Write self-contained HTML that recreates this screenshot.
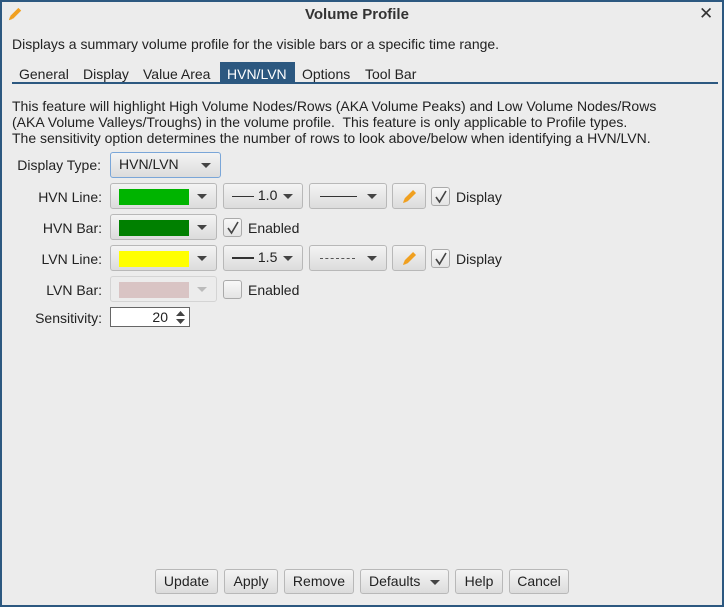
<!DOCTYPE html>
<html><head><style>
*{box-sizing:border-box}
body{margin:0;width:724px;height:607px;background:#ececec;font-family:"Liberation Sans",Arial,sans-serif;font-size:14px;color:#222;position:relative;overflow:hidden}
.frame{position:absolute;left:0;top:0;width:724px;height:607px;border:2px solid #2c5880}
.a{position:absolute;white-space:nowrap}
.btn{position:absolute;height:25px;border:1px solid #b8b8b8;border-radius:3px;background:linear-gradient(#f4f4f4,#dcdcdc);text-align:center;line-height:23px;font-size:14px;color:#222}
.tri{display:inline-block;width:0;height:0;border-left:5px solid transparent;border-right:5px solid transparent;border-top:5px solid #444;vertical-align:middle}
.lbl{position:absolute;text-align:right;width:90px;left:12px;font-size:14px}
.cb{position:absolute;width:19px;height:19px;border:1px solid #aaa;border-radius:3px;background:linear-gradient(#f8f8f8,#e4e4e4)}
.sw{position:absolute;left:8px;top:5px;width:70px;height:16px}
</style></head><body>
<div class="frame"></div>
<svg class="a" style="left:6px;top:5px" width="18" height="18" viewBox="0 0 16 16"><path d="M3 13 L4 9.5 L11 2.5 L13.5 5 L6.5 12 Z" fill="#f0a020"/><path d="M2.5 13.5 L3.5 10.5 L5.5 12.5 Z" fill="#f0a020"/></svg>
<div class="a" style="left:305px;top:6px;font-weight:bold;font-size:15px;color:#333">Volume Profile</div>
<div class="a" style="left:699px;top:4px;font-size:17px;color:#333">✕</div>
<div class="a" style="left:12px;top:36px">Displays a summary volume profile for the visible bars or a specific time range.</div>
<div class="a" style="left:12px;top:82px;width:706px;height:2px;background:#2c5880"></div>
<div class="a" style="left:220px;top:62px;width:75px;height:21px;background:#2c5880"></div>
<div class="a" style="left:19px;top:66px">General</div>
<div class="a" style="left:83px;top:66px">Display</div>
<div class="a" style="left:143px;top:66px">Value Area</div>
<div class="a" style="left:227px;top:66px;color:#fff">HVN/LVN</div>
<div class="a" style="left:302px;top:66px">Options</div>
<div class="a" style="left:365px;top:66px">Tool Bar</div>
<div class="a" style="left:12px;top:98px;line-height:16px">This feature will highlight High Volume Nodes/Rows (AKA Volume Peaks) and Low Volume Nodes/Rows<br>(AKA Volume Valleys/Troughs) in the volume profile.&nbsp; This feature is only applicable to Profile types.<br>The sensitivity option determines the number of rows to look above/below when identifying a HVN/LVN.</div>

<div class="lbl" style="top:157px;left:11px">Display Type:</div>
<div class="btn" style="left:110px;top:152px;width:111px;height:26px;border-color:#7aa6d8;text-align:left;padding-left:8px">HVN/LVN<span class="tri" style="position:absolute;right:9px;top:10px"></span></div>

<div class="lbl" style="top:189px">HVN Line:</div>
<div class="btn" style="left:110px;top:183px;width:107px;height:26px"><div class="sw" style="background:#00b400"></div><span class="tri" style="position:absolute;right:9px;top:10px"></span></div>
<div class="btn" style="left:223px;top:183px;width:80px;height:26px;text-align:left;padding-left:8px"><span style="display:inline-block;width:22px;height:1px;background:#333;vertical-align:middle"></span> 1.0<span class="tri" style="position:absolute;right:9px;top:10px"></span></div>
<div class="btn" style="left:309px;top:183px;width:78px;height:26px"><span style="position:absolute;left:10px;top:12px;width:37px;height:1px;background:#333"></span><span class="tri" style="position:absolute;right:9px;top:10px"></span></div>
<div class="btn" style="left:392px;top:183px;width:34px;height:26px"><svg style="position:absolute;left:7px;top:3px" width="19" height="19" viewBox="0 0 16 16"><path d="M3 13 L4 9.5 L11 2.5 L13.5 5 L6.5 12 Z" fill="#f0a020"/><path d="M2.5 13.5 L3.5 10.5 L5.5 12.5 Z" fill="#f0a020"/></svg></div>
<div class="cb" style="left:431px;top:187px"><svg width="17" height="17"><path d="M4 9 L7.5 14 L14 3" stroke="#444" stroke-width="1.6" fill="none"/></svg></div>
<div class="a" style="left:456px;top:189px">Display</div>

<div class="lbl" style="top:220px">HVN Bar:</div>
<div class="btn" style="left:110px;top:214px;width:107px;height:26px"><div class="sw" style="background:#008000"></div><span class="tri" style="position:absolute;right:9px;top:10px"></span></div>
<div class="cb" style="left:223px;top:218px"><svg width="17" height="17"><path d="M4 9 L7.5 14 L14 3" stroke="#444" stroke-width="1.6" fill="none"/></svg></div>
<div class="a" style="left:248px;top:220px">Enabled</div>

<div class="lbl" style="top:251px">LVN Line:</div>
<div class="btn" style="left:110px;top:245px;width:107px;height:26px"><div class="sw" style="background:#ffff00"></div><span class="tri" style="position:absolute;right:9px;top:10px"></span></div>
<div class="btn" style="left:223px;top:245px;width:80px;height:26px;text-align:left;padding-left:8px"><span style="display:inline-block;width:22px;height:2px;background:#333;vertical-align:middle"></span> 1.5<span class="tri" style="position:absolute;right:9px;top:10px"></span></div>
<div class="btn" style="left:309px;top:245px;width:78px;height:26px"><span style="position:absolute;left:10px;top:12px;width:35px;height:0;border-top:1px dashed #555"></span><span class="tri" style="position:absolute;right:9px;top:10px"></span></div>
<div class="btn" style="left:392px;top:245px;width:34px;height:26px"><svg style="position:absolute;left:7px;top:3px" width="19" height="19" viewBox="0 0 16 16"><path d="M3 13 L4 9.5 L11 2.5 L13.5 5 L6.5 12 Z" fill="#f0a020"/><path d="M2.5 13.5 L3.5 10.5 L5.5 12.5 Z" fill="#f0a020"/></svg></div>
<div class="cb" style="left:431px;top:249px"><svg width="17" height="17"><path d="M4 9 L7.5 14 L14 3" stroke="#444" stroke-width="1.6" fill="none"/></svg></div>
<div class="a" style="left:456px;top:251px">Display</div>

<div class="lbl" style="top:282px">LVN Bar:</div>
<div class="btn" style="left:110px;top:276px;width:107px;height:26px;background:#ececec;border-color:#d4d4d4"><div class="sw" style="background:#d9c4c4"></div><span class="tri" style="position:absolute;right:9px;top:10px;border-top-color:#bbb"></span></div>
<div class="cb" style="left:223px;top:280px"></div>
<div class="a" style="left:248px;top:282px">Enabled</div>

<div class="lbl" style="top:310px">Sensitivity:</div>
<div class="a" style="left:110px;top:307px;width:80px;height:20px;border:1px solid #666;background:#fff"><span style="position:absolute;right:21px;top:1px">20</span><svg style="position:absolute;right:3px;top:2px" width="11" height="15"><path d="M1 6 L5.5 1 L10 6 Z M1 9 L5.5 14 L10 9 Z" fill="#444"/></svg></div>

<div class="btn" style="left:155px;top:569px;width:63px">Update</div>
<div class="btn" style="left:224px;top:569px;width:54px">Apply</div>
<div class="btn" style="left:284px;top:569px;width:70px">Remove</div>
<div class="btn" style="left:360px;top:569px;width:89px;text-align:left;padding-left:8px">Defaults <span class="tri" style="margin-left:6px"></span></div>
<div class="btn" style="left:455px;top:569px;width:48px">Help</div>
<div class="btn" style="left:509px;top:569px;width:60px">Cancel</div>
</body></html>
